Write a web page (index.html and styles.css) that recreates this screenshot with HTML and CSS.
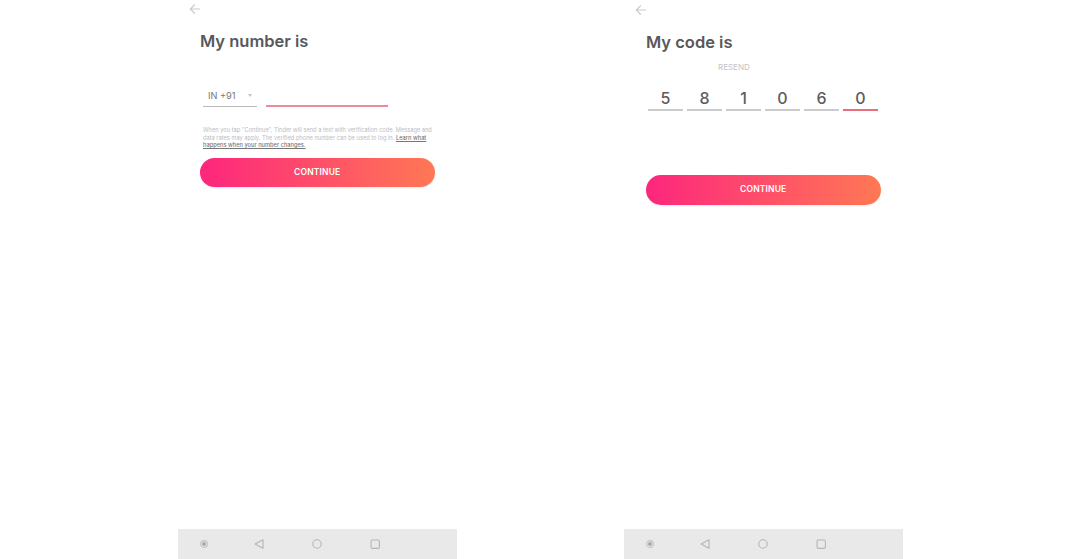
FILE: index.html
```html
<!DOCTYPE html>
<html lang="en">
<head>
<meta charset="utf-8">
<title>Phone verification</title>
<link rel="stylesheet" href="styles.css">
</head>
<body>
<div class="stage">
  <section class="phone">
    <div class="content">
      <svg class="back" viewBox="0 0 12 12" width="12" height="12"><path d="M11 6H1.5M5.8 1.5 1.3 6l4.5 4.5" fill="none" stroke="#c9c9cc" stroke-width="1.1"/></svg>
      <h1 class="title">My number is</h1>
      <div class="number-row">
        <div class="country"><span>IN +91</span><i class="caret"></i></div>
        <div class="number-input"></div>
      </div>
      <p class="legal"><span class="legal-line">When you tap "Continue", Tinder will send a text with verification code. Message and</span> <span class="legal-line">data rates may apply. The verified phone number can be used to log in. <b>Learn what</b></span> <span class="legal-line"><b>happens when your number changes.</b></span></p>
      <button class="cta cta-number">CONTINUE</button>
    </div>
    <nav class="navbar">
      <svg class="nav-icon nav-dot" viewBox="0 0 12 12" width="12" height="12"><circle cx="6" cy="6" r="2" fill="#a9a9a9"/><circle cx="6" cy="6" r="3.4" fill="none" stroke="#c2c2c2" stroke-width="1.1"/></svg>
      <svg class="nav-icon" viewBox="0 0 12 12" width="12" height="12"><path d="M10 1.8v8.4L2 6z" fill="none" stroke="#b5b5b5" stroke-width="1.1" stroke-linejoin="round"/></svg>
      <svg class="nav-icon" viewBox="0 0 12 12" width="12" height="12"><circle cx="6" cy="6" r="4.2" fill="none" stroke="#b5b5b5" stroke-width="1.1"/></svg>
      <svg class="nav-icon" viewBox="0 0 12 12" width="12" height="12"><rect x="2" y="2" width="8.4" height="8.4" rx="1.4" fill="none" stroke="#b5b5b5" stroke-width="1.1"/></svg>
    </nav>
  </section>
  <section class="phone">
    <div class="content">
      <svg class="back back-code" viewBox="0 0 12 12" width="12" height="12"><path d="M11 6H1.5M5.8 1.5 1.3 6l4.5 4.5" fill="none" stroke="#c9c9cc" stroke-width="1.1"/></svg>
      <h1 class="title">My code is</h1>
      <div class="resend">RESEND</div>
      <div class="code-row">
        <span class="digit">5</span><span class="digit">8</span><span class="digit">1</span><span class="digit">0</span><span class="digit">6</span><span class="digit digit-active">0</span>
      </div>
      <button class="cta cta-code">CONTINUE</button>
    </div>
    <nav class="navbar">
      <svg class="nav-icon nav-dot" viewBox="0 0 12 12" width="12" height="12"><circle cx="6" cy="6" r="2" fill="#a9a9a9"/><circle cx="6" cy="6" r="3.4" fill="none" stroke="#c2c2c2" stroke-width="1.1"/></svg>
      <svg class="nav-icon" viewBox="0 0 12 12" width="12" height="12"><path d="M10 1.8v8.4L2 6z" fill="none" stroke="#b5b5b5" stroke-width="1.1" stroke-linejoin="round"/></svg>
      <svg class="nav-icon" viewBox="0 0 12 12" width="12" height="12"><circle cx="6" cy="6" r="4.2" fill="none" stroke="#b5b5b5" stroke-width="1.1"/></svg>
      <svg class="nav-icon" viewBox="0 0 12 12" width="12" height="12"><rect x="2" y="2" width="8.4" height="8.4" rx="1.4" fill="none" stroke="#b5b5b5" stroke-width="1.1"/></svg>
    </nav>
  </section>
</div>
</body>
</html>
```
FILE: styles.css
```css
* { box-sizing: border-box; }
html, body { margin: 0; padding: 0; background: #fff; }
body { width: 1068px; height: 559px; overflow: hidden; font-family: "Inter", "Liberation Sans", sans-serif; }
.stage { display: flex; gap: 167px; padding-left: 178px; height: 559px; }
.phone { width: 279px; height: 559px; display: flex; flex-direction: column; }
.content { flex: 1; padding: 3px 22px 0; display: flex; flex-direction: column; align-items: flex-start; }
.back { margin-left: -11px; display: block; flex: none; }
.back-code { margin-top: 1px; }
.title { margin: 16px 0 0; font-size: 16.5px; line-height: 20px; font-weight: 600; color: #58585c; }
.number-row { display: flex; gap: 9px; margin: 35px 0 0 3px; align-items: flex-end; }
.country { width: 54px; height: 21px; border-bottom: 1px solid #b9b9bc; display: flex; align-items: center; padding: 0 0 1px 5px; font-size: 9.2px; color: #75757a; }
.caret { margin-left: 12px; width: 0; height: 0; border: 2.5px solid transparent; border-top: 3px solid #c4c4c8; border-bottom: 0; }
.number-input { width: 122px; height: 2px; background: #ee8a97; }
.legal { margin: 19px 0 0 3px; width: 232px; font-size: 5.7px; line-height: 7.6px; color: #bcbcbf; }
.legal-line { display: block; white-space: nowrap; height: 7.6px; }
.legal b { color: #77777b; font-weight: 500; text-decoration: underline; }
.cta { width: 234.5px; height: 29.5px; border: 0; border-radius: 15px; padding: 0 0 1px; background: linear-gradient(90deg, #fd267d 0%, #ff7854 100%); color: #fff; font-family: inherit; font-size: 8.5px; font-weight: 600; letter-spacing: 0.15px; box-shadow: 0 1px 2px rgba(0,0,0,.08); }
.cta-number { margin-top: 9px; }
.cta-code { margin-top: 64px; }
.resend { margin: 10px 0 0 72px; font-size: 8px; line-height: 10px; color: #c2c2c5; }
.code-row { display: flex; gap: 4px; margin: 16px 0 0 2px; }
.digit { width: 35px; height: 23px; border-bottom: 2px solid #cbcbcd; text-align: center; font-size: 16px; line-height: 21px; font-weight: 500; color: #5c5c60; }
.digit-active { border-bottom-color: #e8707d; }
.navbar { height: 30px; background: #e9e9e9; display: flex; align-items: center; padding-left: 20px; gap: 46px; }
.nav-dot { margin-right: -3px; }
```
